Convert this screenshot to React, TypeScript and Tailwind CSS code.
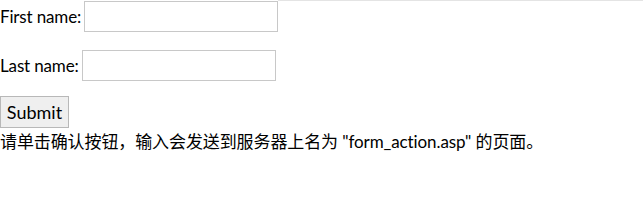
export default function App() {
  return (
    <div className="w-[643px] h-[215px] bg-white text-[17px] text-black font-['Lato','Noto_Sans_CJK_SC',sans-serif]">
      <form className="flex flex-col">
        <div className="flex items-start h-[33px]">
          <label className="mt-[5px] leading-[24px] tracking-[-0.15px]">First name:</label>
          <input
            type="text"
            className="ml-[3px] mt-[1px] w-[194px] h-[31px] border border-[#c8c8c8] bg-white outline-none"
          />
          <div className="flex-1 border-t border-[#e4e4e4]" />
        </div>
        <div className="flex items-start mt-[16px] h-[33px]">
          <label className="mt-[5px] leading-[24px] tracking-[-0.15px]">Last name:</label>
          <input
            type="text"
            className="ml-[3px] mt-[1px] w-[194px] h-[31px] border border-[#c8c8c8] bg-white outline-none"
          />
        </div>
        <div className="mt-[14px]">
          <button
            type="button"
            className="w-[69px] h-[32px] border border-[#b8b8b8] bg-[#efefef] leading-[24px] text-[18px]"
          >
            Submit
          </button>
        </div>
        <p className="leading-[28px] tracking-[-0.1px]">
          请单击确认按钮，输入会发送到服务器上名为 "form_action.asp" 的页面。
        </p>
      </form>
    </div>
  );
}
